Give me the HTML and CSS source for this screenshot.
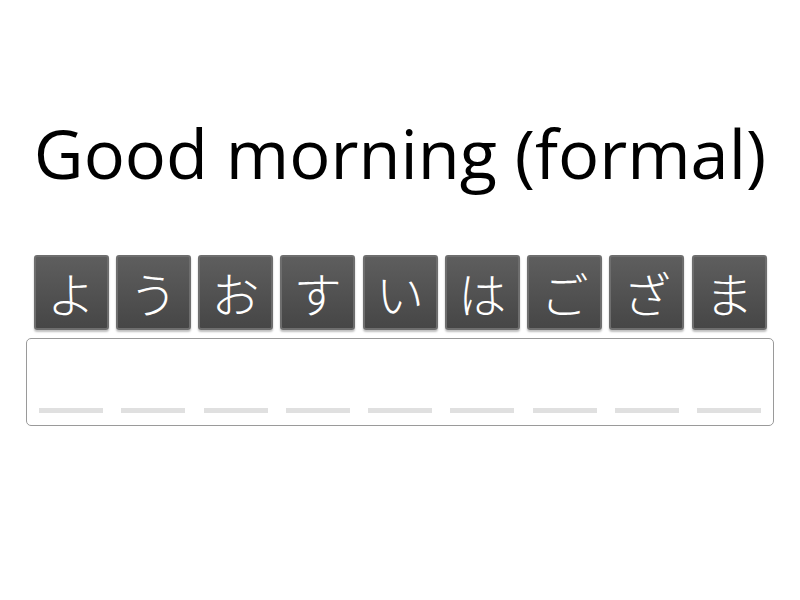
FILE: index.html
```html
<!DOCTYPE html>
<html>
<head>
<meta charset="utf-8">
<link rel="stylesheet" href="styles.css">
</head>
<body>
<div class="page">
  <h1 class="title">Good morning (formal)</h1>
  <div class="tiles">
    <div class="tile">よ</div>
    <div class="tile">う</div>
    <div class="tile">お</div>
    <div class="tile">す</div>
    <div class="tile">い</div>
    <div class="tile">は</div>
    <div class="tile">ご</div>
    <div class="tile">ざ</div>
    <div class="tile">ま</div>
  </div>
  <div class="answer">
    <span class="slot"></span><span class="slot"></span><span class="slot"></span>
    <span class="slot"></span><span class="slot"></span><span class="slot"></span>
    <span class="slot"></span><span class="slot"></span><span class="slot"></span>
  </div>
</div>
</body>
</html>
```
FILE: styles.css
```css
html, body {
  margin: 0;
  padding: 0;
  background: #fff;
}
.page {
  width: 800px;
  height: 600px;
  display: flex;
  flex-direction: column;
  align-items: center;
  font-family: "Open Sans", "Noto Sans CJK JP", sans-serif;
}
.title {
  margin: 108px 0 0 0;
  font-weight: 400;
  font-size: 68.5px;
  line-height: 90px;
  color: #000;
}
.tiles {
  margin-top: 57px;
  display: flex;
  gap: 7.25px;
}
.tile {
  width: 71px;
  height: 71px;
  border: 2px solid #6e6e6e;
  border-radius: 3px;
  background: linear-gradient(#5e5e5e, #464646);
  box-shadow: 0 2px 2px rgba(0,0,0,0.25);
  color: #fff;
  font-family: "Noto Sans CJK JP", sans-serif;
  font-weight: 300;
  font-size: 48px;
  line-height: 71px;
  text-align: center;
}
.answer {
  margin-top: 8px;
  width: 748px;
  height: 88px;
  box-sizing: border-box;
  border: 1px solid #9a9a9a;
  border-radius: 5px;
  display: flex;
  align-items: flex-end;
  gap: 18.25px;
  padding: 0 12px 12px 12px;
}
.slot {
  width: 64px;
  height: 5px;
  background: #e0e0e0;
}
```
